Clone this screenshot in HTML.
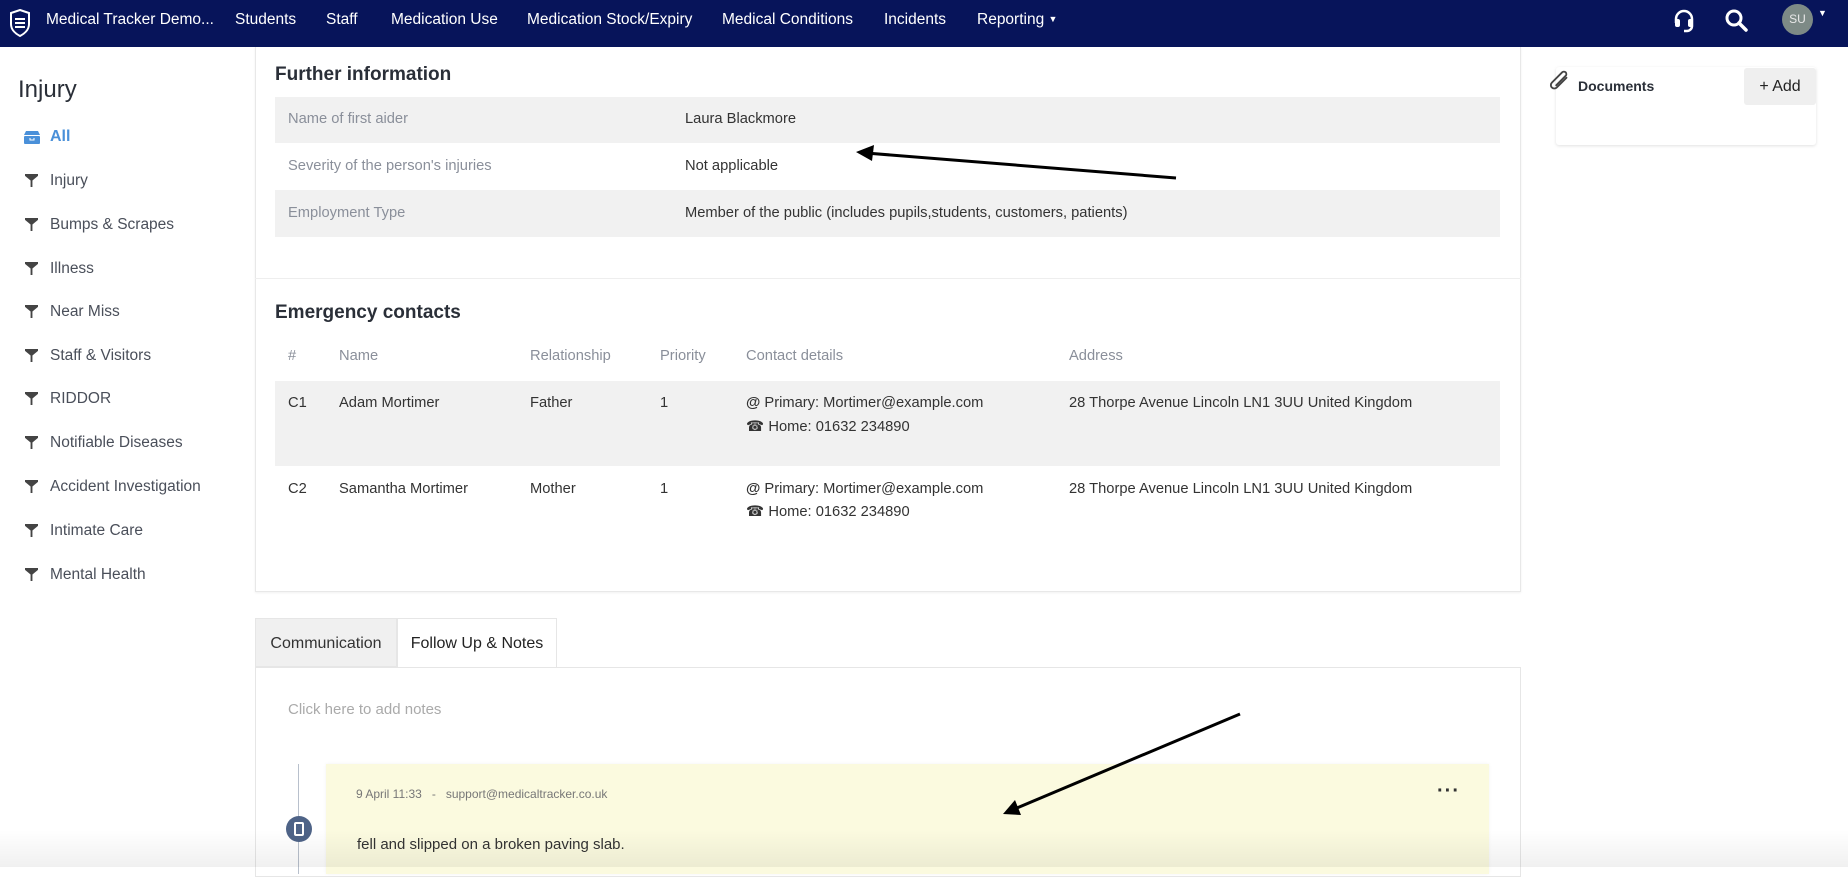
<!DOCTYPE html>
<html><head><meta charset="utf-8"><style>
*{margin:0;padding:0;box-sizing:border-box}
body{width:1848px;height:867px;overflow:hidden;background:#fff;font-family:"Liberation Sans",sans-serif;color:#333;position:relative}
.a{position:absolute;white-space:nowrap}
.nav{position:absolute;left:0;top:0;width:1848px;height:47px;background:#07145a}
.nav .a{color:#fff;font-size:15.5px;top:11px}
.side{font-size:15.5px;color:#4a4f5a}
.card{position:absolute;left:255px;top:47px;width:1266px;height:545px;background:#fff;border:1px solid #e8e8e8;border-top:none;box-shadow:0 1px 2px rgba(0,0,0,.06)}
.row{position:absolute;left:275px;width:1225px;background:#f1f1f1}
.lbl{color:#8a8f9a;font-size:14.7px}
.val{color:#333;font-size:14.7px}
.h{font-weight:bold;font-size:19px;color:#2a2f38}
</style></head><body>
<div class="nav">
<svg class="a" style="left:9px;top:9px" width="22" height="28" viewBox="0 0 22 28"><path d="M11 1 L20 4 V15 C20 21 15 25 11 27 C7 25 2 21 2 15 V4 Z" fill="none" stroke="#fff" stroke-width="2"/><path d="M6 10h10M6 14h10M6 18h10" stroke="#fff" stroke-width="2"/></svg>
<div class="a" style="left:46px">Medical Tracker Demo...</div>
<div class="a" style="left:235px">Students</div>
<div class="a" style="left:326px">Staff</div>
<div class="a" style="left:391px">Medication Use</div>
<div class="a" style="left:527px">Medication Stock/Expiry</div>
<div class="a" style="left:722px">Medical Conditions</div>
<div class="a" style="left:884px">Incidents</div>
<div class="a" style="left:977px">Reporting <span style="font-size:9px;vertical-align:2px">▼</span></div>
<svg class="a" style="left:1672px;top:8px" width="24" height="28" viewBox="0 0 24 28"><path d="M4 15 V11 a8 8 0 0 1 16 0 V18 a5 5 0 0 1 -5 5 H12" fill="none" stroke="#fff" stroke-width="2.5"/><rect x="3" y="11" width="5" height="8" rx="2" fill="#fff"/><rect x="16" y="11" width="5" height="8" rx="2" fill="#fff"/></svg>
<svg class="a" style="left:1724px;top:8px" width="24" height="24" viewBox="0 0 24 24"><circle cx="10" cy="10" r="7" fill="none" stroke="#fff" stroke-width="3"/><path d="M15 15 L22 22" stroke="#fff" stroke-width="3.5" stroke-linecap="round"/></svg>
<div class="a" style="left:1782px;top:4px;width:31px;height:31px;border-radius:50%;background:#7d8a86;color:#e8e8e8;font-size:12px;text-align:center;line-height:31px">SU</div>
<div class="a" style="left:1818px;top:8px;font-size:9px">▼</div>
</div>
<div class="a" style="left:18px;top:76px;font-size:24px;color:#2a2f38">Injury</div>
<svg class="a" style="left:24px;top:131px" width="16" height="13" viewBox="0 0 16 13"><path d="M2 0h12l2 4H0z" fill="#4a90d9"/><rect x="0" y="5" width="16" height="8" rx="1" fill="#4a90d9"/><path d="M6 7v2h4V7" stroke="#fff" fill="none"/></svg>
<div class="a" style="left:50px;top:128px;font-size:16px;font-weight:bold;color:#4a90d9">All</div>
<div class="side">
<div class="a" style="left:50px;top:172px">Injury</div>
<div class="a" style="left:50px;top:216px">Bumps &amp; Scrapes</div>
<div class="a" style="left:50px;top:260px">Illness</div>
<div class="a" style="left:50px;top:303px">Near Miss</div>
<div class="a" style="left:50px;top:347px">Staff &amp; Visitors</div>
<div class="a" style="left:50px;top:390px">RIDDOR</div>
<div class="a" style="left:50px;top:434px">Notifiable Diseases</div>
<div class="a" style="left:50px;top:478px">Accident Investigation</div>
<div class="a" style="left:50px;top:522px">Intimate Care</div>
<div class="a" style="left:50px;top:566px">Mental Health</div>
</div>
<svg width="0" height="0" style="position:absolute"><defs><symbol id="f" viewBox="0 0 14 14"><path d="M0 0h14v2L8 7v7H6V7L0 2z" fill="#444"/></symbol></defs></svg>
<svg class="a" style="left:25px;top:174px" width="13" height="13"><use href="#f"/></svg>
<svg class="a" style="left:25px;top:218px" width="13" height="13"><use href="#f"/></svg>
<svg class="a" style="left:25px;top:262px" width="13" height="13"><use href="#f"/></svg>
<svg class="a" style="left:25px;top:305px" width="13" height="13"><use href="#f"/></svg>
<svg class="a" style="left:25px;top:349px" width="13" height="13"><use href="#f"/></svg>
<svg class="a" style="left:25px;top:392px" width="13" height="13"><use href="#f"/></svg>
<svg class="a" style="left:25px;top:436px" width="13" height="13"><use href="#f"/></svg>
<svg class="a" style="left:25px;top:480px" width="13" height="13"><use href="#f"/></svg>
<svg class="a" style="left:25px;top:524px" width="13" height="13"><use href="#f"/></svg>
<svg class="a" style="left:25px;top:568px" width="13" height="13"><use href="#f"/></svg>

<div class="card"></div>
<div class="a" style="left:255px;top:278px;width:1266px;border-top:1px solid #eee"></div>
<div class="a h" style="left:275px;top:64px">Further information</div>
<div class="row" style="top:97px;height:46px"></div>
<div class="row" style="top:190px;height:47px"></div>
<div class="a lbl" style="left:288px;top:111px">Name of first aider</div>
<div class="a val" style="left:685px;top:111px">Laura Blackmore</div>
<div class="a lbl" style="left:288px;top:158px">Severity of the person's injuries</div>
<div class="a val" style="left:685px;top:158px">Not applicable</div>
<div class="a lbl" style="left:288px;top:205px">Employment Type</div>
<div class="a val" style="left:685px;top:205px">Member of the public (includes pupils,students, customers, patients)</div>

<div class="a h" style="left:275px;top:302px">Emergency contacts</div>
<div class="a lbl" style="left:288px;top:348px">#</div>
<div class="a lbl" style="left:339px;top:348px">Name</div>
<div class="a lbl" style="left:530px;top:348px">Relationship</div>
<div class="a lbl" style="left:660px;top:348px">Priority</div>
<div class="a lbl" style="left:746px;top:348px">Contact details</div>
<div class="a lbl" style="left:1069px;top:348px">Address</div>
<div class="row" style="top:381px;height:85px"></div>
<div class="a val" style="left:288px;top:395px">C1</div>
<div class="a val" style="left:339px;top:395px">Adam Mortimer</div>
<div class="a val" style="left:530px;top:395px">Father</div>
<div class="a val" style="left:660px;top:395px">1</div>
<div class="a val" style="left:746px;top:395px"><b>@</b> Primary: Mortimer@example.com</div>
<div class="a val" style="left:746px;top:418px">☎ Home: 01632 234890</div>
<div class="a val" style="left:1069px;top:395px">28 Thorpe Avenue Lincoln LN1 3UU United Kingdom</div>
<div class="a val" style="left:288px;top:481px">C2</div>
<div class="a val" style="left:339px;top:481px">Samantha Mortimer</div>
<div class="a val" style="left:530px;top:481px">Mother</div>
<div class="a val" style="left:660px;top:481px">1</div>
<div class="a val" style="left:746px;top:481px"><b>@</b> Primary: Mortimer@example.com</div>
<div class="a val" style="left:746px;top:503px">☎ Home: 01632 234890</div>
<div class="a val" style="left:1069px;top:481px">28 Thorpe Avenue Lincoln LN1 3UU United Kingdom</div>

<div class="a" style="left:255px;top:618px;width:142px;height:49px;background:#f0f0f0;border:1px solid #e6e6e6;font-size:16px;color:#333;line-height:49px;text-align:center">Communication</div>
<div class="a" style="left:397px;top:618px;width:160px;height:50px;background:#fff;border:1px solid #e6e6e6;border-bottom:none;font-size:16px;color:#222;line-height:49px;text-align:center">Follow Up &amp; Notes</div>
<div class="a" style="left:255px;top:667px;width:1266px;height:210px;border:1px solid #e6e6e6;background:#fff"></div>
<div class="a" style="left:557px;top:667px;width:964px;border-top:1px solid #e6e6e6"></div>
<div class="a" style="left:288px;top:701px;font-size:15px;color:#aaa">Click here to add notes</div>
<div class="a" style="left:298px;top:764px;width:1px;height:110px;background:#b8c0cc"></div>
<div class="a" style="left:326px;top:764px;width:1163px;height:110px;background:#fbfadf;box-shadow:0 0 3px rgba(0,0,0,.06)"></div>
<div class="a" style="left:286px;top:816px;width:26px;height:26px;border-radius:50%;background:#4e6387"></div>
<div class="a" style="left:294px;top:822px;width:10px;height:14px;border:2px solid #fff;border-radius:2px"></div>
<div class="a" style="left:356px;top:787px;font-size:12px;color:#777">9 April 11:33 &nbsp;&nbsp;- &nbsp;&nbsp;support@medicaltracker.co.uk</div>
<div class="a" style="left:1437px;top:780px;font-size:20px;font-weight:bold;color:#333;letter-spacing:1px">···</div>
<div class="a" style="left:357px;top:836px;font-size:15px;color:#333">fell and slipped on a broken paving slab.</div>
<div class="a" style="left:0;top:830px;width:1848px;height:37px;background:linear-gradient(rgba(0,0,0,0),rgba(0,0,0,.06))"></div>

<div class="a" style="left:1556px;top:67px;width:260px;height:78px;background:#fff;box-shadow:0 1px 3px rgba(0,0,0,.12);border-radius:3px"></div>
<svg class="a" style="left:1548px;top:68px" width="24" height="26" viewBox="0 0 22 24"><path d="M17 9 L8 18 a3 3 0 0 1 -4.5 -4.5 L13 4 a2.2 2.2 0 0 1 3.2 3.2 L7.5 16" fill="none" stroke="#444" stroke-width="1.7" stroke-linecap="round"/></svg>
<div class="a" style="left:1578px;top:78px;font-size:14px;font-weight:bold;color:#2a2f38">Documents</div>
<div class="a" style="left:1744px;top:68px;width:72px;height:37px;background:#efefef;border-radius:3px;font-size:16px;color:#222;text-align:center;line-height:37px">+ Add</div>

<svg class="a" style="left:0;top:0" width="1848" height="867"><path d="M1176 178 L866 153" stroke="#000" stroke-width="3"/><path d="M856 152 L874 145 L872 161 Z" fill="#000"/><path d="M1240 714 L1012 810" stroke="#000" stroke-width="3"/><path d="M1003 814 L1015 800 L1021 815 Z" fill="#000"/></svg>
</body></html>
